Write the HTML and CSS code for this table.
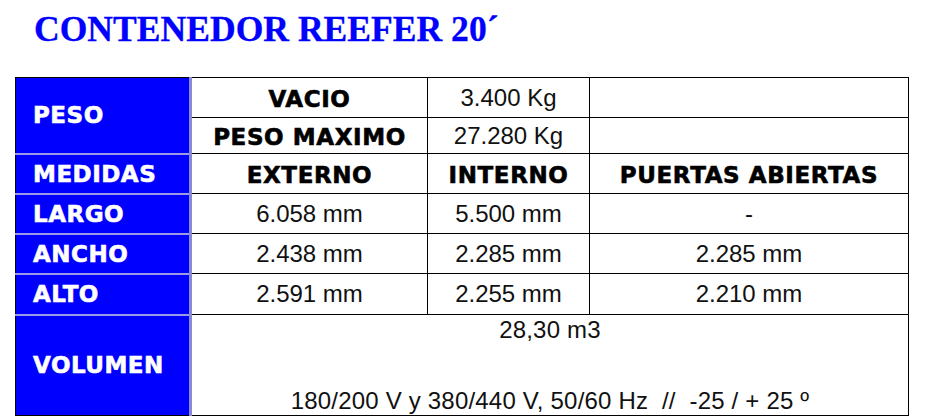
FILE: index.html
```html
<!DOCTYPE html>
<html lang="es">
<head>
<meta charset="utf-8">
<title>Contenedor Reefer 20</title>
<link rel="stylesheet" href="styles.css">
</head>
<body>
<h1 class="title">CONTENEDOR REEFER 20´</h1>
<table class="spec">
  <colgroup>
    <col class="c1"><col class="c2"><col class="c3"><col class="c4">
  </colgroup>
  <tr class="r40">
    <td class="label" rowspan="2">PESO</td>
    <td class="head">VACIO</td>
    <td class="val">3.400 Kg</td>
    <td class="val gl"></td>
  </tr>
  <tr class="r36">
    <td class="head">PESO MAXIMO</td>
    <td class="val">27.280 Kg</td>
    <td class="val gl"></td>
  </tr>
  <tr class="r40">
    <td class="label">MEDIDAS</td>
    <td class="head">EXTERNO</td>
    <td class="head">INTERNO</td>
    <td class="head gl">PUERTAS ABIERTAS</td>
  </tr>
  <tr class="r40">
    <td class="label">LARGO</td>
    <td class="val">6.058 mm</td>
    <td class="val">5.500 mm</td>
    <td class="val gl">-</td>
  </tr>
  <tr class="r40">
    <td class="label">ANCHO</td>
    <td class="val">2.438 mm</td>
    <td class="val">2.285 mm</td>
    <td class="val gl">2.285 mm</td>
  </tr>
  <tr class="r41">
    <td class="label">ALTO</td>
    <td class="val">2.591 mm</td>
    <td class="val">2.255 mm</td>
    <td class="val gl">2.210 mm</td>
  </tr>
  <tr class="r100">
    <td class="label">VOLUMEN</td>
    <td class="val vol" colspan="3">
      <div class="vol-box">
        <span>28,30 m3</span>
        <span>180/200 V y 380/440 V, 50/60 Hz &nbsp;// &nbsp;-25 / + 25 º</span>
      </div>
    </td>
  </tr>
</table>
</body>
</html>
```
FILE: styles.css
```css
html, body {
  margin: 0;
  padding: 0;
  background: #ffffff;
}

.title {
  margin: 9px 0 0 34px;
  font-family: "Liberation Serif", "Times New Roman", serif;
  font-weight: bold;
  font-size: 35.6px;
  line-height: 40px;
  color: #0000ff;
  -webkit-text-stroke: 0.3px #0000ff;
}

.spec {
  margin: 28px 0 0 15px;
  width: 893px;
  table-layout: fixed;
  border-collapse: collapse;
  border: 1px solid #000;
}

.c1 { width: 175px; }
.c2 { width: 237px; }
.c3 { width: 162px; }
.c4 { width: 319px; }

.r40 { height: 40px; }
.r36 { height: 36px; }
.r41 { height: 41px; }
.r100 { height: 100px; }

.spec td {
  padding: 0;
  border: 1px solid #000;
}

.spec td.label {
  background: #0000ff;
  color: #ffffff;
  font-family: "DejaVu Sans", "Liberation Sans", sans-serif;
  font-weight: bold;
  font-size: 23px;
  letter-spacing: 0.5px;
  -webkit-text-stroke: 0.6px #ffffff;
  padding-left: 17px;
  text-align: left;
  vertical-align: middle;
  border-top: 2px solid #9a9ae8;
  border-bottom: 2px solid #9a9ae8;
  border-right: 3px solid #8a8ad0;
  border-left: 1px solid #000;
}

.spec tr:first-child td.label { border-top: 1px solid #000; }
.spec tr:last-child td.label { border-bottom: 1px solid #000; }

.head {
  font-family: "DejaVu Sans", "Liberation Sans", sans-serif;
  font-weight: bold;
  font-size: 23px;
  letter-spacing: 0.6px;
  -webkit-text-stroke: 0.6px #000;
  color: #000;
  text-align: center;
  vertical-align: middle;
  padding-top: 3px !important;
}

.val {
  font-family: "Liberation Sans", Arial, sans-serif;
  font-size: 24px;
  color: #111;
  text-align: center;
  vertical-align: middle;
}

.spec td.gl { border-left: 1px solid #808080; }

.spec td.vol { vertical-align: top; }

.vol-box {
  height: 100px;
  box-sizing: border-box;
  padding: 3px 0 2px;
  display: flex;
  flex-direction: column;
  justify-content: space-between;
  align-items: center;
  line-height: 24px;
  white-space: pre;
  letter-spacing: 0.2px;
}
```
